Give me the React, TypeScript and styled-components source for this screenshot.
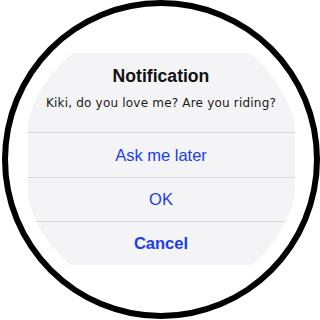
import styled, { createGlobalStyle } from 'styled-components';

const GlobalStyle = createGlobalStyle`
  html, body {
    margin: 0;
    padding: 0;
    background: #ffffff;
  }
  body {
    font-family: "Liberation Sans", Arial, sans-serif;
  }
`;

const actions = [
  { label: 'Ask me later', strong: false },
  { label: 'OK', strong: false },
  { label: 'Cancel', strong: true },
];

export default function App() {
  return (
    <>
      <GlobalStyle />
      <Screen>
        <Bezel>
          <Face>
            <Alert>
              <Header>
                <Title>Notification</Title>
                <Message>Kiki, do you love me? Are you riding?</Message>
              </Header>
              {actions.map((a) => (
                <Action key={a.label} $strong={a.strong}>
                  {a.label}
                </Action>
              ))}
            </Alert>
          </Face>
        </Bezel>
      </Screen>
    </>
  );
}

const Screen = styled.div`
  width: 320px;
  height: 320px;
  display: flex;
  align-items: flex-start;
  justify-content: center;
  padding-left: 1px;
  box-sizing: border-box;
`;

const Bezel = styled.div`
  width: 318px;
  height: 319px;
  box-sizing: border-box;
  border: 6px solid #000;
  border-radius: 50%;
  display: flex;
  align-items: center;
  justify-content: center;
`;

const Face = styled.div`
  width: 278px;
  height: 278px;
  border-radius: 50%;
  overflow: hidden;
  box-sizing: border-box;
  padding: 32px 0 0 6px;
`;

const Alert = styled.div`
  width: 267px;
  height: 212px;
  background: #f4f4f6;
  display: flex;
  flex-direction: column;
`;

const Header = styled.div`
  height: 81px;
  box-sizing: border-box;
  padding-top: 13px;
  display: flex;
  flex-direction: column;
  align-items: center;
`;

const Title = styled.div`
  font-size: 17.6px;
  line-height: 21px;
  font-weight: bold;
  color: #111;
`;

const Message = styled.div`
  margin-top: 7px;
  font-family: "DejaVu Sans", "Liberation Sans", sans-serif;
  font-size: 12px;
  line-height: 18px;
  letter-spacing: 0.2px;
  color: #1a1a1a;
  white-space: nowrap;
`;

const Action = styled.div<{ $strong: boolean }>`
  height: 44px;
  border-top: 1px solid #d8d8dc;
  display: flex;
  align-items: center;
  justify-content: center;
  font-size: 16.5px;
  font-weight: ${(p) => (p.$strong ? 'bold' : 'normal')};
  color: #1c3cf2;

  &:last-child {
    height: 43px;
  }
`;
